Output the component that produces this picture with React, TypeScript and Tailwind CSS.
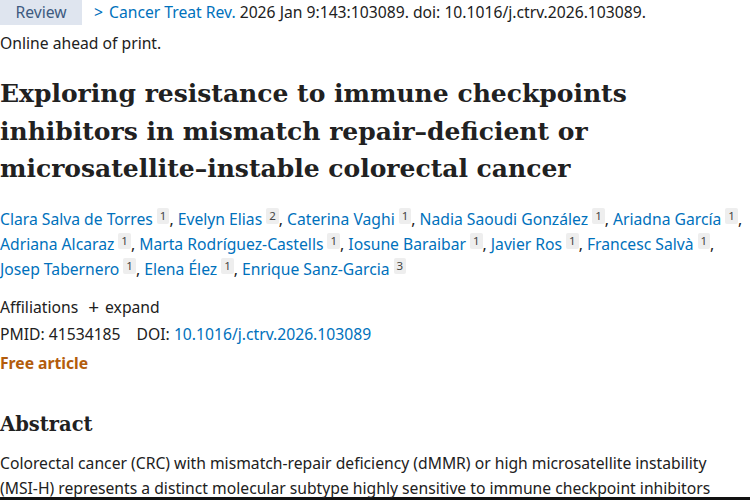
import React from "react";

const sans = { fontFamily: '"Noto Sans", "Open Sans", sans-serif' };
const serif = { fontFamily: '"DejaVu Serif", "Liberation Serif", serif' };

const authors: [string, string][] = [
  ["Clara Salva de Torres", "1"],
  ["Evelyn Elias", "2"],
  ["Caterina Vaghi", "1"],
  ["Nadia Saoudi González", "1"],
  ["Ariadna García", "1"],
  ["Adriana Alcaraz", "1"],
  ["Marta Rodríguez-Castells", "1"],
  ["Iosune Baraibar", "1"],
  ["Javier Ros", "1"],
  ["Francesc Salvà", "1"],
  ["Josep Tabernero", "1"],
  ["Elena Élez", "1"],
  ["Enrique Sanz-Garcia", "3"],
];

function Sup({ n }: { n: string }) {
  return (
    <span className="relative -top-[5px] ml-[4px] inline-block rounded-[2px] bg-[#eeeeee] px-[3px] text-[11.5px] leading-[16px] text-[#444]">
      {n}
    </span>
  );
}

export default function App() {
  const lines = [authors.slice(0, 5), authors.slice(5, 10), authors.slice(10)];
  return (
    <div className="h-[500px] w-[750px] overflow-hidden bg-white text-[15.7px] text-[#212121]" style={sans}>
      <div className="flex h-[497px] flex-col">
        <div className="flex h-[25px] items-center">
          <span className="flex h-[25px] w-[82px] items-center justify-center bg-[#dfe5ef] text-[#3d5a80]">Review</span>
          <span className="ml-[12px] text-[#0071bc]">
            <span className="mr-[6px]">&gt;</span>Cancer Treat Rev.
          </span>
          <span className="ml-[4px]">2026 Jan 9:143:103089. doi: 10.1016/j.ctrv.2026.103089.</span>
        </div>
        <div className="mt-[6px] leading-[24px]">Online ahead of print.</div>
        <h1 className="mt-[20px] text-[25px] font-bold leading-[37.5px] text-[#212121]" style={serif}>
          Exploring resistance to immune checkpoints
          <br />
          inhibitors in mismatch repair–deficient or
          <br />
          microsatellite–instable colorectal cancer
        </h1>
        <div className="mt-[19px] flex flex-col text-[#0071bc]">
          {lines.map((line, li) => (
            <div key={li} className="leading-[25px]">
              {line.map(([name, n], i) => (
                <span key={i}>
                  {name}
                  <Sup n={n} />
                  {li < 2 || i < line.length - 1 ? <span className="text-[#212121]">, </span> : null}
                </span>
              ))}
            </div>
          ))}
        </div>
        <div className="mt-[13px] flex items-center leading-[25px]">
          <span>Affiliations</span>
          <span className="ml-[10px] text-[19px] leading-none">+</span>
          <span className="ml-[6px]">expand</span>
        </div>
        <div className="mt-[2px] leading-[25px]">
          PMID: 41534185<span className="ml-[16px]">DOI: </span>
          <span className="text-[#0071bc]">10.1016/j.ctrv.2026.103089</span>
        </div>
        <div className="mt-[4px] font-bold leading-[25px] text-[#b35c0b]">Free article</div>
        <h2 className="mt-[34px] text-[19.5px] font-bold leading-[30px]" style={serif}>
          Abstract
        </h2>
        <p className="mt-[11px] leading-[25px]">
          Colorectal cancer (CRC) with mismatch-repair deficiency (dMMR) or high microsatellite instability
          <br />
          (MSI-H) represents a distinct molecular subtype highly sensitive to immune checkpoint inhibitors
        </p>
      </div>
      <div className="h-[3px] bg-[#111]" />
    </div>
  );
}
